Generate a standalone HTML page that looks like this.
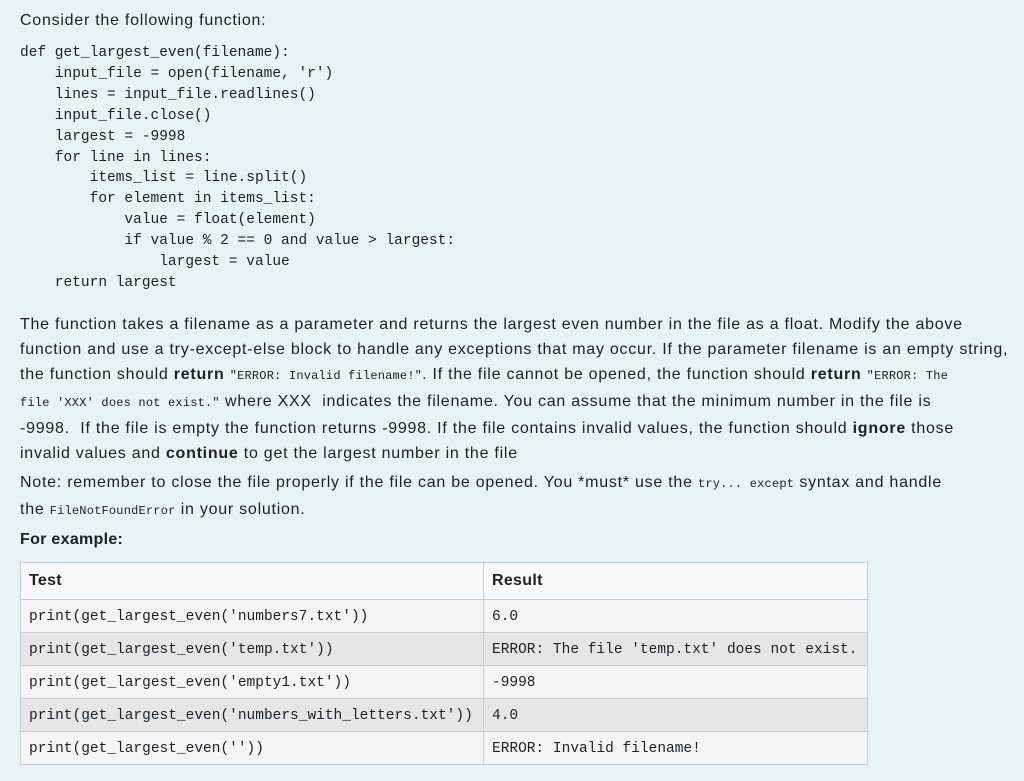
<!DOCTYPE html>
<html><head><meta charset="utf-8"><style>
body{margin:0;background:#e7f3f5;width:1024px;height:781px;overflow:hidden;font-family:"Liberation Sans",sans-serif;color:#1d2125;font-size:16px}
.t{position:absolute;left:20px;white-space:nowrap;letter-spacing:0.75px}
pre{position:absolute;left:20px;top:43px;margin:0;font-family:"Liberation Mono",monospace;font-size:14.5px;line-height:20.9px;color:#1d2125}
.p{position:absolute;left:20px;top:312px;line-height:25px;white-space:nowrap;letter-spacing:0.75px}
code{font-family:"Liberation Mono",monospace;font-size:12px;letter-spacing:0.2px}
table{position:absolute;left:20px;top:562px;border-collapse:collapse;width:848px}
td,th{border:1px solid #c8cdd0;padding:0 8px;text-align:left;white-space:nowrap}
th{height:36px;background:#f8f9fa;font-weight:bold;font-size:16px;letter-spacing:0.3px}
td{height:30px;font-family:"Liberation Mono",monospace;font-size:14.5px;background:#f5f5f5;padding-top:2px}
tr.g td{background:#e6e6e6}
</style></head><body>
<div class="t" style="top:12px">Consider the following function:</div>
<pre>def get_largest_even(filename):
    input_file = open(filename, 'r')
    lines = input_file.readlines()
    input_file.close()
    largest = -9998
    for line in lines:
        items_list = line.split()
        for element in items_list:
            value = float(element)
            if value % 2 == 0 and value &gt; largest:
                largest = value
    return largest</pre>
<div class="p">The function takes a filename as a parameter and returns the largest even number in the file as a float. Modify the above<br>
function and use a try-except-else block to handle any exceptions that may occur. If the parameter filename is an empty string,<br>
the function should <b>return</b> <code>"ERROR: Invalid filename!"</code>. If the file cannot be opened, the function should <b>return</b> <code>"ERROR: The</code><br>
<code>file 'XXX' does not exist."</code> where XXX &nbsp;indicates the filename. You can assume that the minimum number in the file is<br>
-9998. &nbsp;If the file is empty the function returns -9998. If the file contains invalid values, the function should <b>ignore</b> those<br>
invalid values and <b>continue</b> to get the largest number in the file</div>
<div class="t" style="top:470px;line-height:25px">Note: remember to close the file properly if the file can be opened. You *must* use the <code>try... except</code> syntax and handle<br>the <code>FileNotFoundError</code> in your solution.</div>
<div class="t" style="top:531px;font-weight:bold;letter-spacing:0.3px">For example:</div>
<table>
<tr><th style="width:446px">Test</th><th>Result</th></tr>
<tr><td>print(get_largest_even('numbers7.txt'))</td><td>6.0</td></tr>
<tr class="g"><td>print(get_largest_even('temp.txt'))</td><td>ERROR: The file 'temp.txt' does not exist.</td></tr>
<tr><td>print(get_largest_even('empty1.txt'))</td><td>-9998</td></tr>
<tr class="g"><td>print(get_largest_even('numbers_with_letters.txt'))</td><td>4.0</td></tr>
<tr><td>print(get_largest_even(''))</td><td>ERROR: Invalid filename!</td></tr>
</table>
</body></html>
